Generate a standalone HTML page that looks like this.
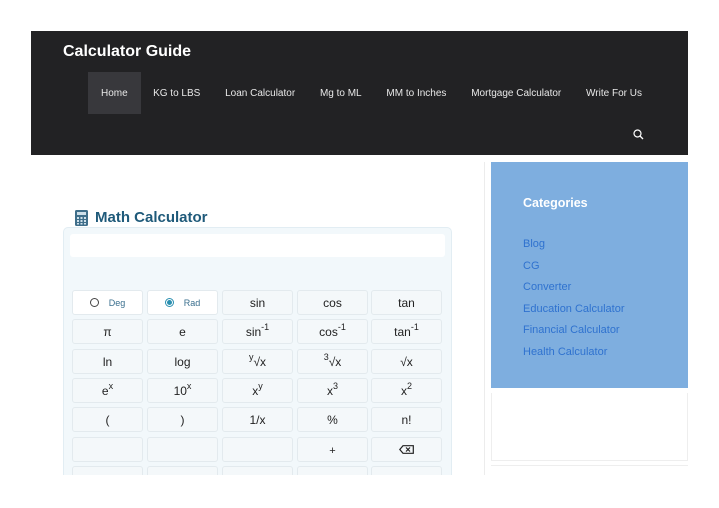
<!DOCTYPE html>
<html><head><meta charset="utf-8"><style>
*{margin:0;padding:0;box-sizing:border-box}
body{width:719px;height:508px;background:#fff;font-family:"Liberation Sans",sans-serif;position:relative;overflow:hidden}
.hdr{position:absolute;left:31px;top:31px;width:657px;height:124px;background:#222224}
.title{position:absolute;left:32px;top:12px;color:#fff;font-weight:bold;font-size:16px}
.nav{position:absolute;top:41px;left:57px;height:42px;display:flex;font-size:10px;color:#e8e8e8}
.nav span{display:block;line-height:44px;padding:0 12.4px}
.nav span.on{background:#38383c;padding:0 13px}
.srch{position:absolute;left:602px;top:98px}
.h2{position:absolute;left:75px;top:209px;color:#1f5a7a;font-weight:bold;font-size:15px;display:flex;align-items:center;gap:7px}
.calc{position:absolute;left:63px;top:227px;width:389px;height:260px;background:#f2f8fb;border:1px solid #e2edf3;border-radius:5px}
.disp{position:absolute;left:6px;top:6px;width:375px;height:23px;background:#fff;border-radius:3px}
.b{position:absolute;width:71px;height:25px;background:#f4f8fa;border:1px solid #e3eaee;border-radius:3px;font-size:12px;color:#222;display:flex;align-items:center;justify-content:center}
.b.w{background:#fff;font-size:9px;color:#3a6f8e;gap:10px}
sup{font-size:9px;position:relative;top:-5px;line-height:0}
.side{position:absolute;left:484px;top:162px;width:1px;height:313px;background:#ececec}
.blue{position:absolute;left:491px;top:162px;width:197px;height:226px;background:#7eaedf}
.blue h3{position:absolute;left:32px;top:34px;color:#fff;font-size:12.5px;font-weight:bold}
.blue ul{position:absolute;left:32px;top:72px;list-style:none;font-size:11px;color:#2f72cf;line-height:21.5px}
.wbox{position:absolute;left:491px;top:393px;width:197px;height:68px;border:1px solid #eee;border-top:none;background:#fff}
.wbox2{position:absolute;left:491px;top:465px;width:197px;height:20px;border-top:1px solid #eee}
.rad{width:9px;height:9px;border:1px solid #444;border-radius:50%}
.rad.on{border-color:#2a8fb0;display:flex;align-items:center;justify-content:center}
.rad.on:after{content:"";width:5px;height:5px;border-radius:50%;background:#2a8fb0}
</style></head><body>
<div class="hdr">
<div class="title">Calculator Guide</div>
<div class="nav"><span class="on">Home</span><span>KG to LBS</span><span>Loan Calculator</span><span>Mg to ML</span><span>MM to Inches</span><span>Mortgage Calculator</span><span>Write For Us</span></div>
<svg class="srch" width="11" height="11" viewBox="0 0 11 11"><circle cx="4.5" cy="4.5" r="3.5" fill="none" stroke="#fff" stroke-width="1.2"/><path d="M7 7l3 3" stroke="#fff" stroke-width="1.3"/></svg>
</div>
<div class="h2"><svg width="13" height="16" viewBox="0 0 13 16"><rect width="13" height="16" rx="1.5" fill="#3f6e8a"/><rect x="2" y="2" width="9" height="3" fill="#cfe0ea"/><g fill="#cfe0ea"><rect x="2" y="7" width="2" height="2"/><rect x="5.5" y="7" width="2" height="2"/><rect x="9" y="7" width="2" height="2"/><rect x="2" y="10" width="2" height="2"/><rect x="5.5" y="10" width="2" height="2"/><rect x="9" y="10" width="2" height="2"/><rect x="2" y="13" width="2" height="1.5"/><rect x="5.5" y="13" width="2" height="1.5"/><rect x="9" y="13" width="2" height="1.5"/></g></svg>Math Calculator</div>
<div class="calc"><div class="disp"></div></div>
<div class="b w" style="left:72px;top:290px"><span class="rad"></span>Deg</div>
<div class="b w" style="left:147px;top:290px"><span class="rad on"></span>Rad</div>
<div class="b" style="left:222px;top:290px">sin</div>
<div class="b" style="left:297px;top:290px">cos</div>
<div class="b" style="left:371px;top:290px">tan</div>
<div class="b" style="left:72px;top:319px">π</div>
<div class="b" style="left:147px;top:319px">e</div>
<div class="b" style="left:222px;top:319px">sin<sup>-1</sup></div>
<div class="b" style="left:297px;top:319px">cos<sup>-1</sup></div>
<div class="b" style="left:371px;top:319px">tan<sup>-1</sup></div>
<div class="b" style="left:72px;top:349px">ln</div>
<div class="b" style="left:147px;top:349px">log</div>
<div class="b" style="left:222px;top:349px"><sup>y</sup>√x</div>
<div class="b" style="left:297px;top:349px"><sup>3</sup>√x</div>
<div class="b" style="left:371px;top:349px">√x</div>
<div class="b" style="left:72px;top:378px">e<sup>x</sup></div>
<div class="b" style="left:147px;top:378px">10<sup>x</sup></div>
<div class="b" style="left:222px;top:378px">x<sup>y</sup></div>
<div class="b" style="left:297px;top:378px">x<sup>3</sup></div>
<div class="b" style="left:371px;top:378px">x<sup>2</sup></div>
<div class="b" style="left:72px;top:407px">(</div>
<div class="b" style="left:147px;top:407px">)</div>
<div class="b" style="left:222px;top:407px">1/x</div>
<div class="b" style="left:297px;top:407px">%</div>
<div class="b" style="left:371px;top:407px">n!</div>
<div class="b" style="left:72px;top:437px"></div>
<div class="b" style="left:147px;top:437px"></div>
<div class="b" style="left:222px;top:437px"></div>
<div class="b" style="left:297px;top:437px;font-size:11px;padding-top:3px">+</div>
<div class="b" style="left:371px;top:437px"><svg width="15" height="9" viewBox="0 0 15 9"><path d="M4 0.7H14.3V8.3H4L0.8 4.5Z" fill="none" stroke="#222" stroke-width="1.2"/><path d="M7 2.5l4 4M11 2.5l-4 4" stroke="#222" stroke-width="1.2"/></svg></div>
<div class="b" style="left:72px;top:466px"></div>
<div class="b" style="left:147px;top:466px"></div>
<div class="b" style="left:222px;top:466px"></div>
<div class="b" style="left:297px;top:466px"></div>
<div class="b" style="left:371px;top:466px"></div>
<div style="position:absolute;left:0;top:475px;width:719px;height:33px;background:#fff"></div>
<div class="side"></div>
<div class="blue"><h3>Categories</h3><ul><li>Blog</li><li>CG</li><li>Converter</li><li>Education Calculator</li><li>Financial Calculator</li><li>Health Calculator</li></ul></div>
<div class="wbox"></div>
<div class="wbox2"></div>
</body></html>
